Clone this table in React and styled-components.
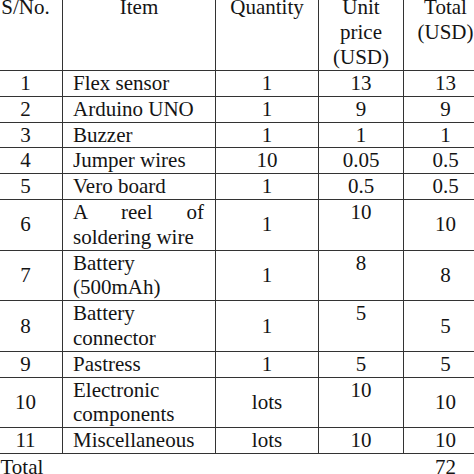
import React from 'react';
import styled, { createGlobalStyle } from 'styled-components';

const GlobalStyle = createGlobalStyle`
  html, body {
    margin: 0;
    padding: 0;
    background: #ffffff;
  }
`;

const Frame = styled.div`
  width: 474px;
  height: 474px;
  overflow: hidden;
  background: #ffffff;
`;

const Table = styled.table`
  margin: -6px 0 0 -12px;
  width: 499px;
  border-collapse: collapse;
  table-layout: fixed;
  font-family: 'Liberation Serif', 'Times New Roman', serif;
  font-size: 21px;
  line-height: 24.8px;
  color: #141414;
`;

const HeadCell = styled.th`
  font-weight: normal;
  vertical-align: top;
  text-align: center;
  line-height: 25px;
  padding: 0 2px;
  height: 74px;
  border: 1.5px solid #333;
`;

const Cell = styled.td`
  border: 1.5px solid #333;
  padding: 0 2px;
  text-align: ${({ $align }) => $align || 'center'};
  vertical-align: ${({ $top }) => ($top ? 'top' : 'middle')};
`;

const ItemCell = styled(Cell)`
  text-align: justify;
  padding: 0 11px 0 10px;
`;

const FootCell = styled.td`
  border: none;
  padding: 1px 2px 0 12px;
  text-align: ${({ $align }) => $align || 'left'};
  vertical-align: top;
`;

const rows = [
  ['1', 'Flex sensor', '1', '13', '13'],
  ['2', 'Arduino UNO', '1', '9', '9'],
  ['3', 'Buzzer', '1', '1', '1'],
  ['4', 'Jumper wires', '10', '0.05', '0.5'],
  ['5', 'Vero board', '1', '0.5', '0.5'],
  ['6', 'A reel of soldering wire', '1', '10', '10'],
  ['7', 'Battery (500mAh)', '1', '8', '8'],
  ['8', 'Battery connector', '1', '5', '5'],
  ['9', 'Pastress', '1', '5', '5'],
  ['10', 'Electronic components', 'lots', '10', '10'],
  ['11', 'Miscellaneous', 'lots', '10', '10'],
];

const App = () => (
  <Frame>
    <GlobalStyle />
    <Table>
      <colgroup>
        <col style={{ width: 74 }} />
        <col style={{ width: 153 }} />
        <col style={{ width: 103 }} />
        <col style={{ width: 85 }} />
        <col style={{ width: 84 }} />
      </colgroup>
      <thead>
        <tr>
          <HeadCell>S/No.</HeadCell>
          <HeadCell>Item</HeadCell>
          <HeadCell>Quantity</HeadCell>
          <HeadCell>
            Unit
            <br />
            price
            <br />
            (USD)
          </HeadCell>
          <HeadCell>
            Total
            <br />
            (USD)
          </HeadCell>
        </tr>
      </thead>
      <tbody>
        {rows.map(([no, item, qty, unit, total]) => (
          <tr key={no}>
            <Cell>{no}</Cell>
            <ItemCell>{item}</ItemCell>
            <Cell>{qty}</Cell>
            <Cell $top>{unit}</Cell>
            <Cell>{total}</Cell>
          </tr>
        ))}
        <tr>
          <FootCell colSpan={4}>Total</FootCell>
          <FootCell $align="center" style={{ paddingLeft: 2 }}>
            72
          </FootCell>
        </tr>
      </tbody>
    </Table>
  </Frame>
);

export default App;
